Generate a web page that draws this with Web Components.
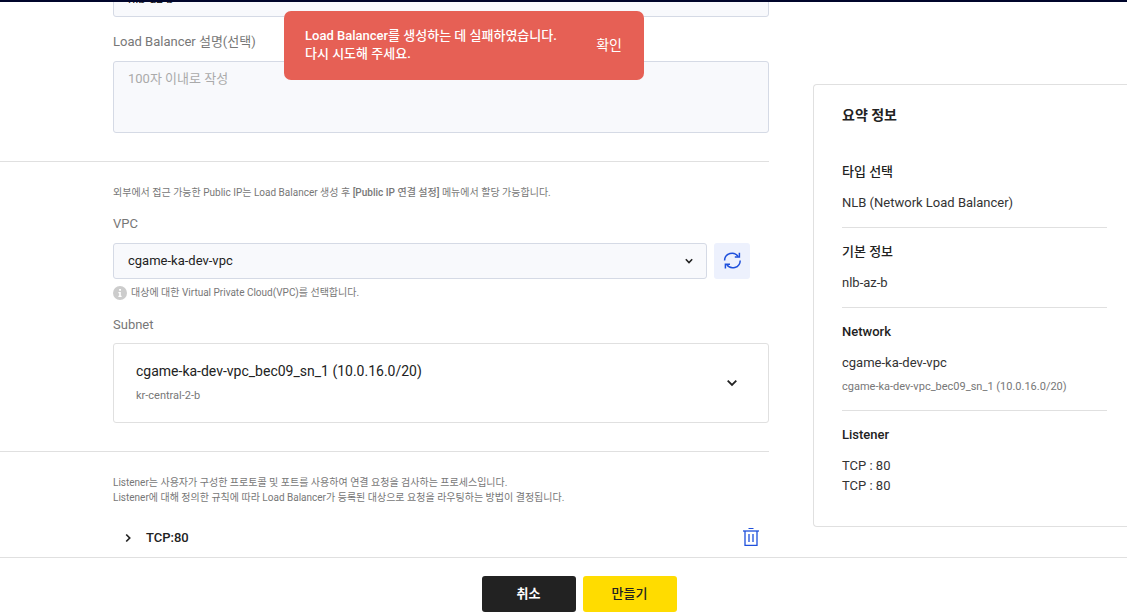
<!DOCTYPE html>
<html lang="ko">
<head>
<meta charset="utf-8">
<meta name="viewport" content="width=device-width, initial-scale=1">
<title>Load Balancer 만들기</title>
<style>
  html, body { margin: 0; height: 100%; }
  body {
    font-family: Roboto, "Noto Sans CJK KR", sans-serif;
    font-size: 13px;
    line-height: 20px;
    color: #222;
    background: #fff;
    --muted: #777;
    --line: #e0e0e0;
    --field-line: #d5dae5;
    --field-bg: #f8f9fc;
    --blue: #1e50dc;
  }
  b { font-weight: 500; }
</style>
</head>
<body>
<app-shell>
  <toast-message slot="toast" action="확인">Load Balancer를 생성하는 데 실패하였습니다.<br>다시 시도해 주세요.</toast-message>

  <form-section>
    <text-field value="nlb-az-b" name="이름"></text-field>
    <text-area label="Load Balancer 설명(선택)" placeholder="100자 이내로 작성"></text-area>
  </form-section>

  <form-section>
    <hint-text>외부에서 접근 가능한 Public IP는 Load Balancer 생성 후 <b>[Public IP 연결 설정]</b> 메뉴에서 할당 가능합니다.</hint-text>
    <select-field label="VPC" value="cgame-ka-dev-vpc">대상에 대한 Virtual Private Cloud(VPC)를 선택합니다.</select-field>
    <subnet-card label="Subnet" zone="kr-central-2-b">cgame-ka-dev-vpc_bec09_sn_1 (10.0.16.0/20)</subnet-card>
  </form-section>

  <form-section>
    <hint-text>Listener는 사용자가 구성한 프로토콜 및 포트를 사용하여 연결 요청을 검사하는 프로세스입니다.<br>Listener에 대해 정의한 규칙에 따라 Load Balancer가 등록된 대상으로 요청을 라우팅하는 방법이 결정됩니다.</hint-text>
    <listener-row>TCP:80</listener-row>
  </form-section>

  <summary-panel slot="aside" heading="요약 정보">
    <summary-group heading="타입 선택">NLB (Network Load Balancer)</summary-group>
    <summary-group heading="기본 정보">nlb-az-b</summary-group>
    <summary-group heading="Network">cgame-ka-dev-vpc<span slot="sub">cgame-ka-dev-vpc_bec09_sn_1 (10.0.16.0/20)</span></summary-group>
    <summary-group heading="Listener" last>TCP : 80<br>TCP : 80</summary-group>
  </summary-panel>

  <action-button slot="actions" kind="dark">취소</action-button>
  <action-button slot="actions">만들기</action-button>
</app-shell>

<script>
const reset = `
  *, *::before, *::after { box-sizing: border-box; }
  :host { display: block; box-sizing: border-box; }
  :host([hidden]) { display: none; }
  button, input, textarea, select { font: inherit; color: inherit; margin: 0; }
  button { border: 0; padding: 0; background: none; cursor: pointer; }
  svg { display: block; flex: none; }
`;
const fieldStyles = `
  label, .label { display: block; margin-bottom: 9px; color: var(--muted); }
  input, textarea, select {
    display: block; width: 100%; padding: 0 14px;
    border: 1px solid var(--field-line); border-radius: 3px;
    background: var(--field-bg); outline: 0;
  }
`;

function define(name, css, html) {
  customElements.define(name, class extends HTMLElement {
    constructor() {
      super();
      const attr = key => this.getAttribute(key) || '';
      const template = document.createElement('template');
      template.innerHTML = `<style>${reset}${css}</style>${html(attr)}`;
      this.attachShadow({ mode: 'open' }).append(template.content.cloneNode(true));
    }
  });
}

define('app-shell', `
  :host { display: flex; flex-direction: column; height: 100vh; min-height: 360px; }
  header { flex: none; height: 2px; background: #00052b; }
  main {
    flex: 1; min-height: 0; overflow: hidden;
    display: grid; grid-template-columns: minmax(0, 1fr) 314px; column-gap: 44px;
    align-items: start;
  }
  .form { margin-top: -21px; }
  .aside { margin-top: 82px; }
  footer {
    flex: none; display: flex; justify-content: center; gap: 7px;
    padding: 18px 0 3px 31px; border-top: 1px solid var(--line); background: #fff;
  }
`, () => `
  <slot name="toast"></slot>
  <header></header>
  <main><div class="form"><slot></slot></div><aside class="aside"><slot name="aside"></slot></aside></main>
  <footer><slot name="actions"></slot></footer>
`);

define('toast-message', `
  :host {
    position: fixed; z-index: 2; top: 11px; left: 284px; width: 360px; height: 69px;
    display: flex; align-items: center; justify-content: space-between;
    padding: 0 22px 2px 21px; border-radius: 7px; background: #e66055; color: #fff;
  }
  p { margin: 0; font-size: 13px; line-height: 18px; font-weight: 500; }
  button { font-size: 14px; line-height: 18px; }
`, a => `<p role="alert"><slot></slot></p><button type="button">${a('action')}</button>`);

define('form-section', `
  :host { padding: 23px 0 28px 113px; border-bottom: 1px solid var(--line); }
  :host(:first-of-type) { padding-top: 0; }
  :host(:last-of-type) { border-bottom: 0; }
`, () => `<slot></slot>`);

define('hint-text', `
  :host { font-size: 10px; line-height: 15px; color: var(--muted); }
`, () => `<slot></slot>`);

define('text-field', fieldStyles + `
  input { height: 36px; padding-bottom: 2px; }
`, a => `<input type="text" aria-label="${a('name')}" value="${a('value')}">`);

define('text-area', fieldStyles + `
  :host { margin-top: 15px; }
  textarea { height: 72px; padding: 7px 14px; resize: none; }
  textarea::placeholder { color: #aaa; }
`, a => `<label for="text">${a('label')}</label><textarea id="text" placeholder="${a('placeholder')}"></textarea>`);

define('select-field', fieldStyles + `
  :host { margin-top: 14px; }
  .row { display: flex; gap: 7px; padding-right: 19px; }
  .box { flex: 1; display: grid; align-items: center; }
  .box > * { grid-area: 1 / 1; }
  .box svg { justify-self: end; margin-right: 13px; pointer-events: none; }
  select { height: 36px; appearance: none; }
  button {
    display: grid; place-items: center; width: 36px; height: 36px;
    border-radius: 3px; background: #edf1fd; color: var(--blue);
  }
  .help { display: flex; align-items: center; gap: 4px; margin: 4px 0 0; font-size: 10px; color: var(--muted); }
`, a => `
  <label for="pick">${a('label')}</label>
  <div class="row">
    <div class="box">
      <select id="pick"><option>${a('value')}</option></select>
      <svg width="10" height="10" viewBox="0 0 10 10" fill="none" stroke="#222" stroke-width="1.6"><path d="M1.8 3.3 5 6.5l3.2-3.2"/></svg>
    </div>
    <button type="button" aria-label="새로고침">
      <svg width="18" height="18" viewBox="0 0 18 18" fill="none" stroke="currentColor" stroke-width="1.5">
        <path d="M1.600 8.600a7.400 7.400 0 0 1 13.600-4M17.200 8.400a7.400 7.400 0 0 1-13.600 4"/>
        <path d="M16.400 .800v4.200h-4.600M2.400 16.400v-4.200h4.600"/>
      </svg>
    </button>
  </div>
  <p class="help">
    <svg width="14" height="14" viewBox="0 0 14 14"><circle cx="7" cy="7" r="7" fill="#ccc"/><path d="M6.100 3.100h1.900v1.600H6.100zM5.400 6h2.400v3.700h.8v1.200H5.400V9.700h.8V7.200h-.8z" fill="#fff"/></svg>
    <span><slot></slot></span>
  </p>
`);

define('subnet-card', fieldStyles + `
  :host { margin-top: 12px; }
  .label { margin-bottom: 8px; }
  button {
    display: flex; align-items: center; justify-content: space-between;
    width: 100%; height: 80px; padding: 0 30px 0 22px; text-align: left;
    border: 1px solid var(--line); border-radius: 3px; background: #fff;
  }
  .title, .zone { display: block; }
  .title { font-size: 14px; }
  .zone { margin-top: 5px; font-size: 11px; color: var(--muted); }
`, a => `
  <span class="label" id="name">${a('label')}</span>
  <button type="button" aria-expanded="false" aria-describedby="name">
    <span><span class="title"><slot></slot></span><span class="zone">${a('zone')}</span></span>
    <svg width="12" height="12" viewBox="0 0 12 12" fill="none" stroke="#222" stroke-width="1.8"><path d="M1.7 3.7 6 8l4.3-4.3"/></svg>
  </button>
`);

define('listener-row', `
  :host { display: flex; align-items: center; justify-content: space-between; height: 30px; margin-top: 18px; padding: 0 10px; }
  button { display: flex; align-items: center; }
  .toggle { gap: 13px; font-weight: 500; }
  .remove { color: var(--blue); padding-bottom: 2px; }
`, () => `
  <button type="button" class="toggle" aria-expanded="false">
    <svg width="10" height="10" viewBox="0 0 10 10" fill="none" stroke="#222" stroke-width="1.7"><path d="M3.2 1.5 6.7 5 3.2 8.5"/></svg>
    <span><slot></slot></span>
  </button>
  <button type="button" class="remove" aria-label="삭제">
    <svg width="16" height="18" viewBox="0 0 16 18" fill="none" stroke="currentColor"><path d="M5.500 .5h5" /><path d="M0 3h16" stroke-width="1.3"/><path d="M2 3v14.3h12V3" stroke-width="1.3"/><path d="M6 6v8M10 6v8" stroke-width="1.3"/></svg>
  </button>
`);

define('summary-panel', `
  :host {
    padding: 20px 20px 15px 28px; border: 1px solid var(--line); border-right: 0;
    border-radius: 4px 0 0 4px; background: #fff;
  }
  h2 { margin: 0 0 23px; font-size: 14px; font-weight: 700; }
`, a => `<h2>${a('heading')}</h2><slot></slot>`);

define('summary-group', `
  :host { padding: 14px 0; border-bottom: 1px solid var(--line); }
  :host([last]) { border-bottom: 0; padding-bottom: 15px; }
  h3 { margin: 0 0 11px; font-size: 13px; font-weight: 500; }
  .value { color: #333; }
  ::slotted([slot="sub"]) { display: block; margin-top: 5px; font-size: 11px; line-height: 18px; color: var(--muted); }
`, a => `<h3>${a('heading')}</h3><div class="value"><slot></slot></div><slot name="sub"></slot>`);

define('action-button', `
  button { min-width: 94px; height: 36px; border-radius: 3px; background: #ffdc00; color: #222; font-size: 13px; font-weight: 500; }
  :host([kind="dark"]) button { background: #222; color: #fff; font-weight: 700; }
`, () => `<button type="button"><slot></slot></button>`);
</script>
</body>
</html>
